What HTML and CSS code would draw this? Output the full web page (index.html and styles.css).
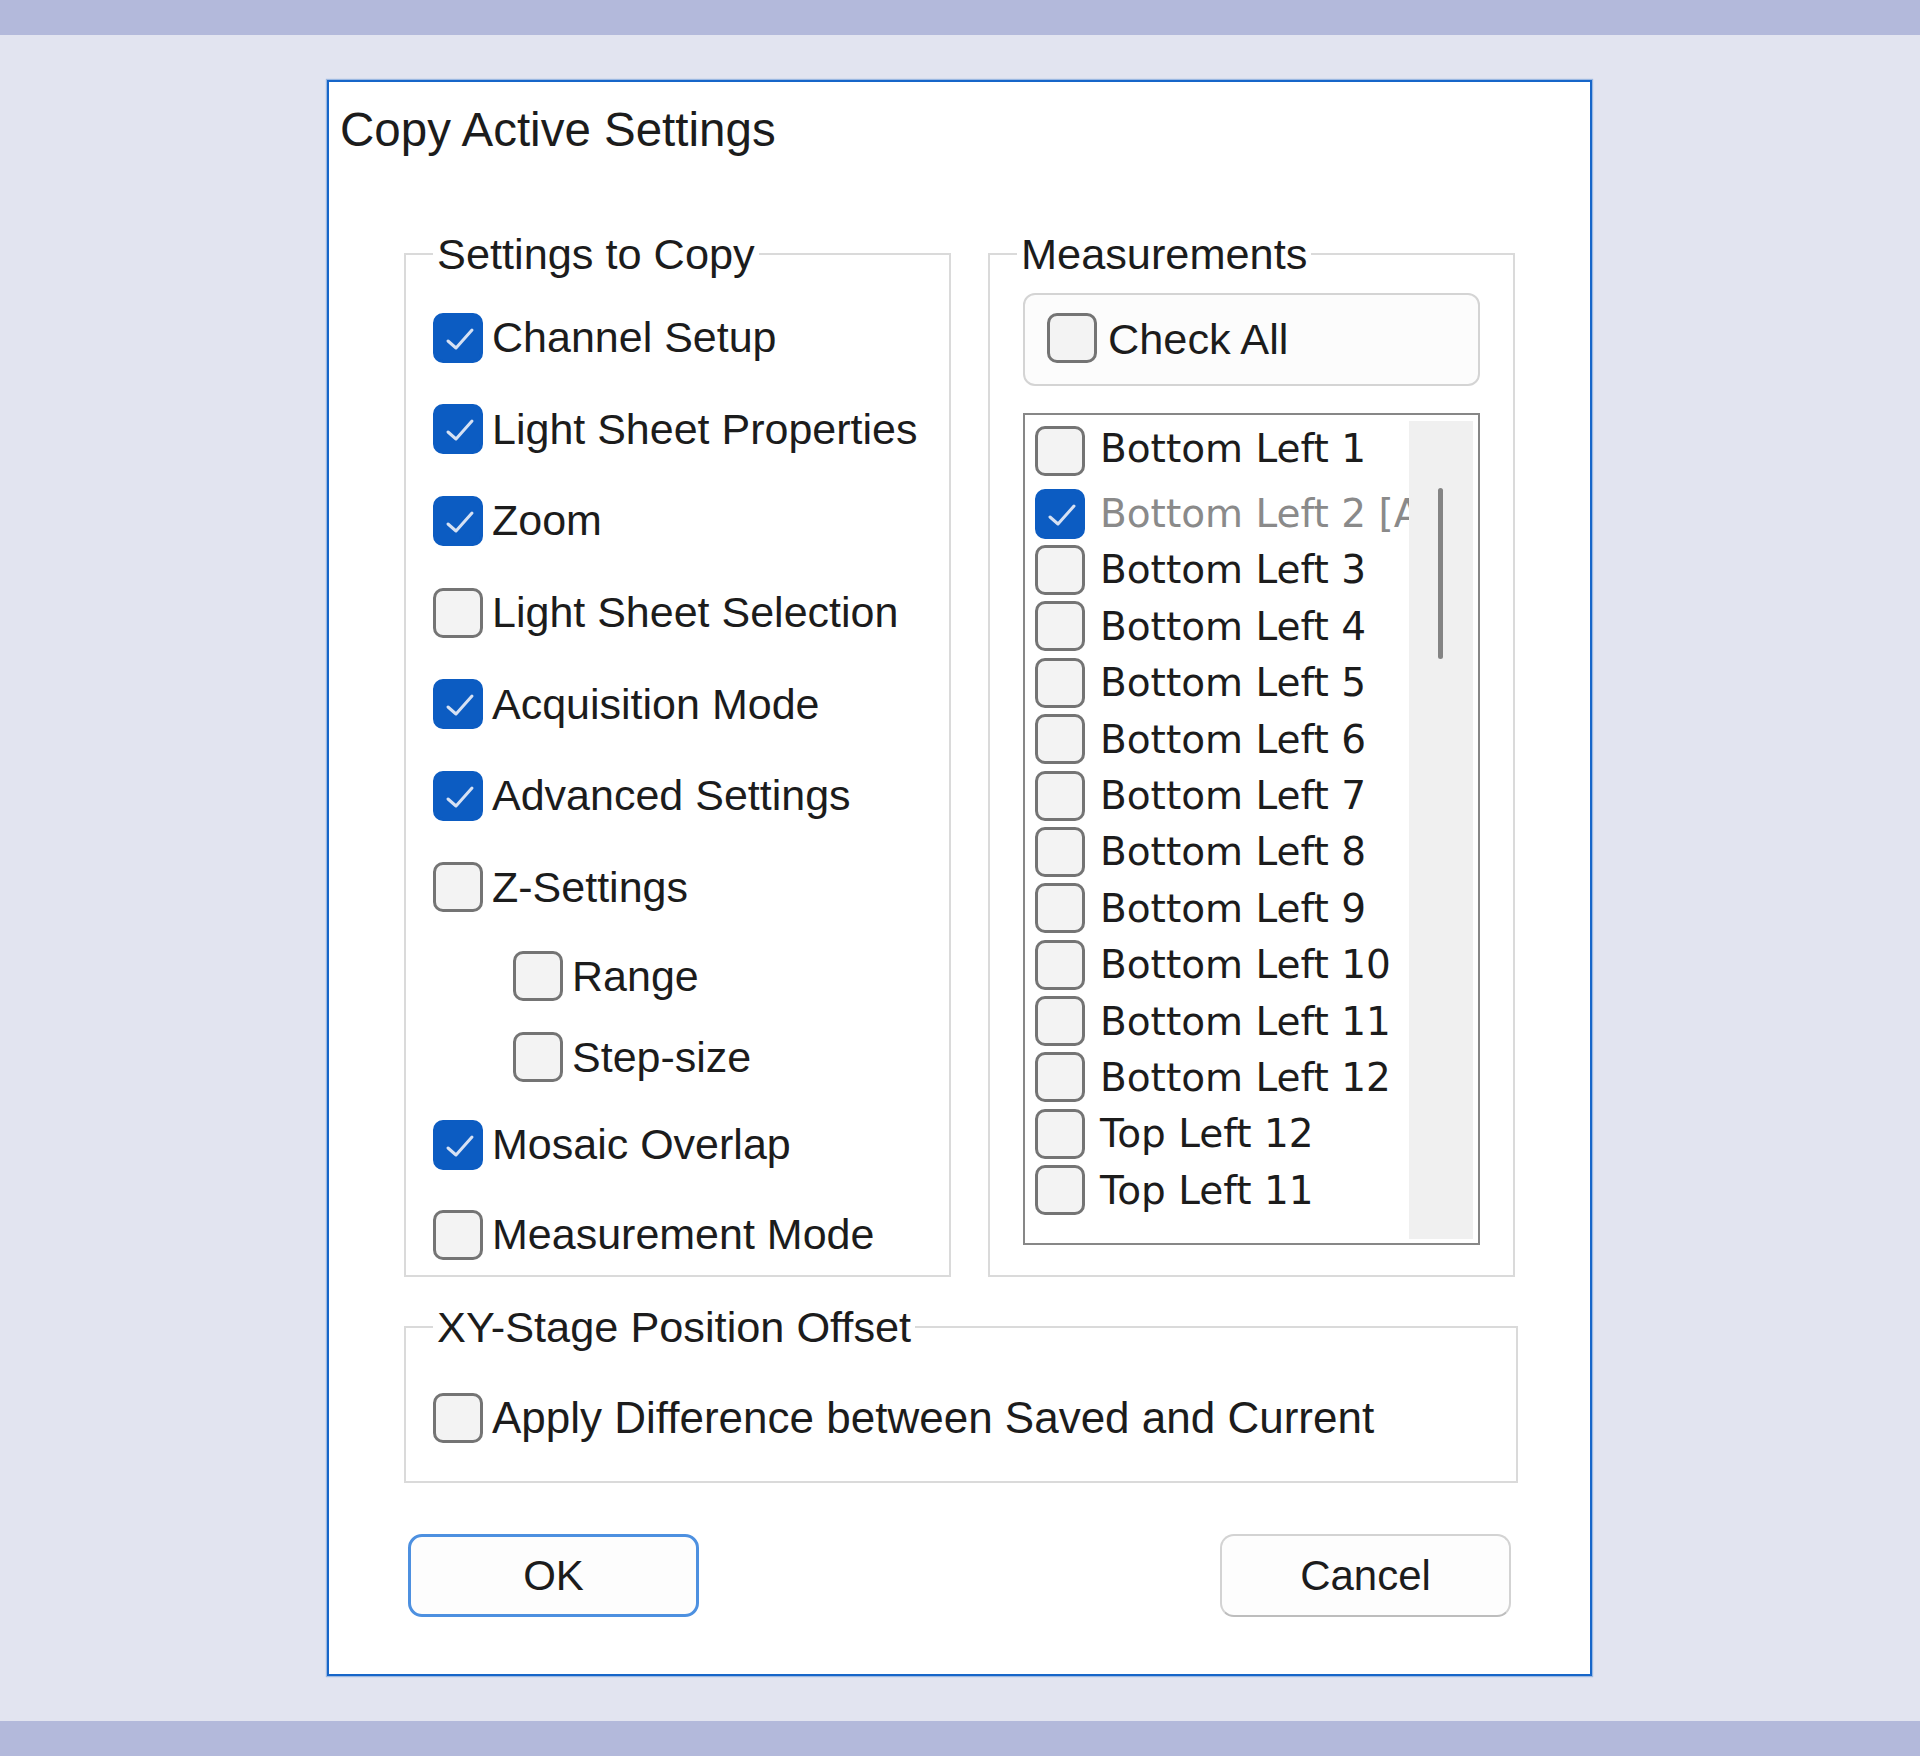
FILE: index.html
```html
<!DOCTYPE html>
<html lang="en">
<head>
    <meta charset="UTF-8">
    <meta name="viewport" content="width=device-width, initial-scale=1.0">
    <title>Copy Active Settings</title>
    <link rel="stylesheet" href="styles.css">
</head>
<body>

<div class="topbar"></div>

<main class="stage">
  <section class="dialog">
    <h1 class="dialog-title">Copy Active Settings</h1>

    <div class="groups">
      <fieldset class="group group-settings">
        <legend>Settings to Copy</legend>
        <div class="opt"><span class="box on"><svg viewBox="0 0 44 44"><path d="M12 25 L20 32 L36 14"/></svg></span>Channel Setup</div>
        <div class="opt"><span class="box on"><svg viewBox="0 0 44 44"><path d="M12 25 L20 32 L36 14"/></svg></span>Light Sheet Properties</div>
        <div class="opt"><span class="box on"><svg viewBox="0 0 44 44"><path d="M12 25 L20 32 L36 14"/></svg></span>Zoom</div>
        <div class="opt"><span class="box"></span>Light Sheet Selection</div>
        <div class="opt"><span class="box on"><svg viewBox="0 0 44 44"><path d="M12 25 L20 32 L36 14"/></svg></span>Acquisition Mode</div>
        <div class="opt"><span class="box on"><svg viewBox="0 0 44 44"><path d="M12 25 L20 32 L36 14"/></svg></span>Advanced Settings</div>
        <div class="opt"><span class="box"></span>Z-Settings</div>
        <div class="opt sub"><span class="box"></span>Range</div>
        <div class="opt sub tail"><span class="box"></span>Step-size</div>
        <div class="opt wide"><span class="box on"><svg viewBox="0 0 44 44"><path d="M12 25 L20 32 L36 14"/></svg></span>Mosaic Overlap</div>
        <div class="opt end"><span class="box"></span>Measurement Mode</div>
      </fieldset>

      <fieldset class="group group-measure">
        <legend>Measurements</legend>
        <div class="check-all"><span class="box"></span>Check All</div>
        <div class="listbox">
          <ul class="items">
            <li class="item"><span class="box"></span>Bottom Left 1</li>
            <li class="item off"><span class="box on"><svg viewBox="0 0 44 44"><path d="M12 25 L20 32 L36 14"/></svg></span>Bottom Left 2 [Active]</li>
            <li class="item"><span class="box"></span>Bottom Left 3</li>
            <li class="item"><span class="box"></span>Bottom Left 4</li>
            <li class="item"><span class="box"></span>Bottom Left 5</li>
            <li class="item"><span class="box"></span>Bottom Left 6</li>
            <li class="item"><span class="box"></span>Bottom Left 7</li>
            <li class="item"><span class="box"></span>Bottom Left 8</li>
            <li class="item"><span class="box"></span>Bottom Left 9</li>
            <li class="item"><span class="box"></span>Bottom Left 10</li>
            <li class="item"><span class="box"></span>Bottom Left 11</li>
            <li class="item"><span class="box"></span>Bottom Left 12</li>
            <li class="item"><span class="box"></span>Top Left 12</li>
            <li class="item"><span class="box"></span>Top Left 11</li>
          </ul>
          <div class="scrolltrack"><div class="thumb"></div></div>
        </div>
      </fieldset>
    </div>

    <fieldset class="group group-xy">
      <legend>XY-Stage Position Offset</legend>
      <div class="opt"><span class="box"></span>Apply Difference between Saved and Current</div>
    </fieldset>

    <div class="buttons">
      <button class="btn btn-ok">OK</button>
      <button class="btn">Cancel</button>
    </div>
  </section>
</main>

<div class="bottombar"></div>

</body>
</html>
```

FILE: styles.css
```css
body {
    margin: 0;
    height: 1756px;
    display: flex;
    flex-direction: column;
    background: #e2e4f0;
    font-family: "Liberation Sans", Arial, sans-serif;
    color: #1c1c1c;
}
.topbar,
.bottombar {
    flex: none;
    height: 35px;
    background: #b3b9db;
}
.stage {
    flex: 1;
    padding: 45px 0 0 327px;
}
.dialog {
    box-sizing: border-box;
    width: 1265px;
    height: 1596px;
    background: #fff;
    border: 2px solid #1766c9;
    box-shadow: 0 0 1px 1px rgba(23, 102, 201, 0.35);
}
.dialog-title {
    margin: 24px 0 0 11px;
    font-size: 47.5px;
    line-height: 47px;
    font-weight: normal;
}

/* group boxes */
.groups {
    display: grid;
    grid-template-columns: 547px 527px;
    column-gap: 37px;
    margin: 79px 0 0 75px;
}
.group {
    margin: 0;
    min-width: 0;
    border: 2px solid #dadada;
}
.group legend {
    font-size: 43.3px;
    line-height: 44px;
    padding: 0 4px;
}
.group-settings {
    padding: 16px 0 0 27px;
}
.group-measure {
    padding: 17px 33px 30px 27px;
}
.group-xy {
    box-sizing: border-box;
    width: 1114px;
    margin: 28px 0 0 75px;
    padding: 44px 0 38px 27px;
}

/* checkbox rows */
.opt {
    display: flex;
    align-items: center;
    gap: 9px;
    height: 91.6px;
    font-size: 43px;
    white-space: nowrap;
}
.opt.sub {
    height: 86px;
    padding-left: 80px;
}
.opt.sub.tail {
    height: 76.3px;
}
.opt.wide {
    height: 98.7px;
}
.opt.end {
    height: 81px;
}
.group-xy .opt {
    height: 50px;
    font-size: 44px;
}
.box {
    flex: none;
    box-sizing: border-box;
    width: 50px;
    height: 50px;
    border: 3px solid #747474;
    border-radius: 10px;
    background: #f3f3f3;
}
.box.on {
    background: #0c5cc2;
    border-color: #0c5cc2;
}
.box svg {
    display: block;
    width: 100%;
    height: 100%;
}
.box path {
    fill: none;
    stroke: #d6e1f3;
    stroke-width: 3;
    stroke-linecap: round;
    stroke-linejoin: round;
}

/* measurements */
.check-all {
    box-sizing: border-box;
    height: 93px;
    margin-left: 6px;
    display: flex;
    align-items: center;
    gap: 11px;
    padding-left: 22px;
    border: 2px solid #d4d4d4;
    border-radius: 12px;
    background: #fcfcfc;
    font-size: 43.3px;
}
.check-all .box {
    margin-bottom: 4px;
}
.listbox {
    box-sizing: border-box;
    height: 832px;
    margin: 27px 0 0 6px;
    display: flex;
    border: 2px solid #878787;
}
.items {
    flex: 1;
    min-width: 0;
    overflow: hidden;
    list-style: none;
    margin: 0;
    padding: 8px 0 0 10px;
    font-family: "DejaVu Sans", Verdana, sans-serif;
    font-size: 39px;
}
.item {
    display: flex;
    align-items: center;
    gap: 15px;
    height: 56.4px;
    white-space: nowrap;
}
.item:first-child {
    margin-bottom: 6px;
    line-height: 1;
    padding-bottom: 6px;
    box-sizing: border-box;
}
.item:first-child .box {
    margin-top: 6px;
}
.item.off {
    color: #8a8a8a;
}
.scrolltrack {
    flex: none;
    width: 64px;
    margin: 6px 5px 4px 0;
    padding: 67px 0 0 29px;
    box-sizing: border-box;
    background: #f0f0f0;
}
.thumb {
    width: 5px;
    height: 171px;
    border-radius: 3px;
    background: #848484;
}

/* buttons */
.buttons {
    display: flex;
    justify-content: space-between;
    margin-top: 51px;
    padding: 0 79px;
}
.btn {
    box-sizing: border-box;
    width: 291px;
    height: 83px;
    padding: 0;
    font-family: "Liberation Sans", Arial, sans-serif;
    font-size: 42px;
    color: #1c1c1c;
    background: #fdfdfd;
    border: 2px solid #d3d3d3;
    border-bottom-color: #bdbdbd;
    border-radius: 14px;
}
.btn-ok {
    border: 3px solid #4d90e0;
}
```
